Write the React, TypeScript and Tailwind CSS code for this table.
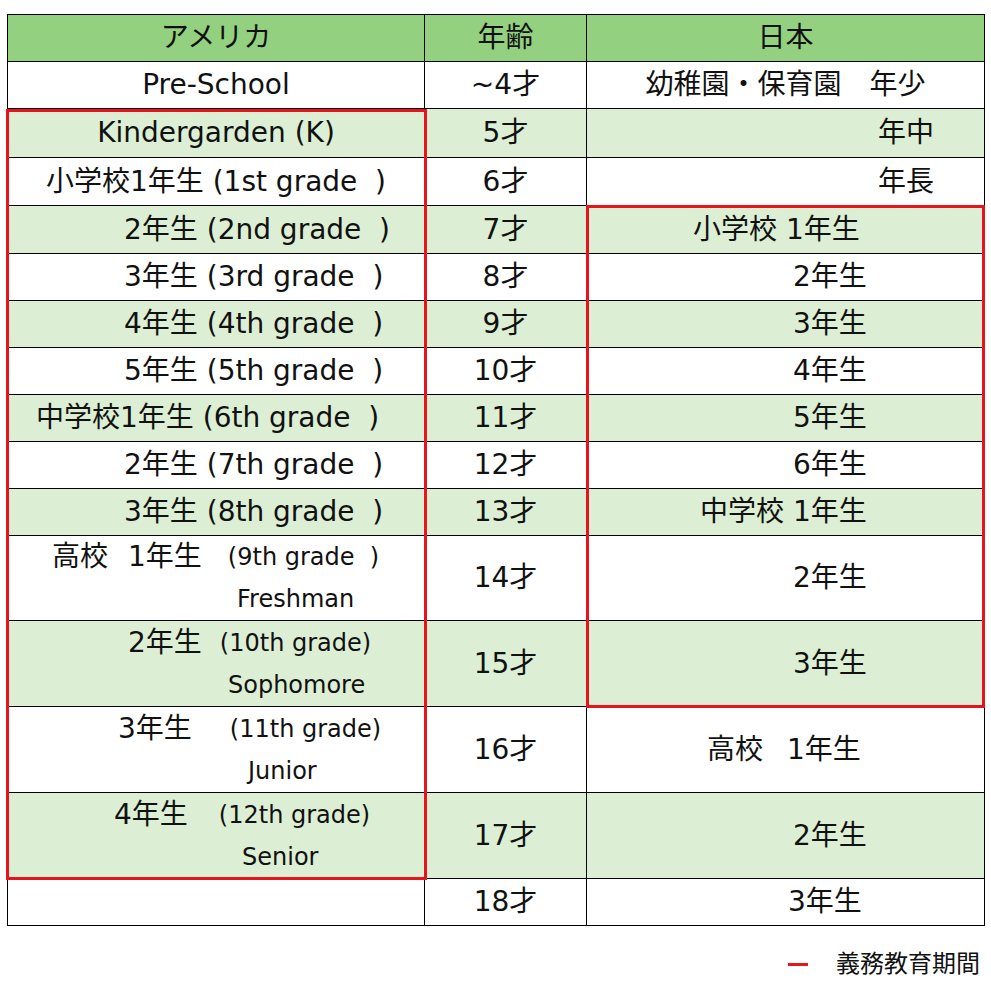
import React from "react";

const FONT = { fontFamily: '"DejaVu Sans", "Noto Sans CJK JP", sans-serif' };

type Row = {
  h: string;
  bg: string;
  c1: React.ReactNode;
  c2: React.ReactNode;
  c3: React.ReactNode;
};

const L = ({ pl, children }: { pl: string; children: React.ReactNode }) => (
  <div className={`flex h-full items-center whitespace-pre ${pl}`}>{children}</div>
);
const C = ({ children }: { children: React.ReactNode }) => (
  <div className="flex h-full items-center justify-center whitespace-pre">{children}</div>
);

const G = "bg-[#dcefd4]";
const W = "bg-white";

export default function App() {
  const rows: Row[] = [
    { h: "h-[47px]", bg: "bg-[#93d07f]", c1: <C>アメリカ</C>, c2: <C>年齢</C>, c3: <C>日本</C> },
    { h: "h-[47px]", bg: W, c1: <C>Pre-School</C>, c2: <C>~4才</C>, c3: <C>幼稚園・保育園　年少</C> },
    { h: "h-[49px]", bg: G, c1: <C>Kindergarden (K)</C>, c2: <C>5才</C>, c3: <L pl="pl-[291px]">年中</L> },
    { h: "h-[48px]", bg: W, c1: <C>小学校1年生 (1st grade  )</C>, c2: <C>6才</C>, c3: <L pl="pl-[291px]">年長</L> },
    { h: "h-[48px]", bg: G, c1: <L pl="pl-[116px]">2年生 (2nd grade  )</L>, c2: <C>7才</C>, c3: <L pl="pl-[106px]">小学校 1年生</L> },
    { h: "h-[47px]", bg: W, c1: <L pl="pl-[116px]">3年生 (3rd grade  )</L>, c2: <C>8才</C>, c3: <L pl="pl-[206px]">2年生</L> },
    { h: "h-[47px]", bg: G, c1: <L pl="pl-[116px]">4年生 (4th grade  )</L>, c2: <C>9才</C>, c3: <L pl="pl-[206px]">3年生</L> },
    { h: "h-[47px]", bg: W, c1: <L pl="pl-[116px]">5年生 (5th grade  )</L>, c2: <C>10才</C>, c3: <L pl="pl-[206px]">4年生</L> },
    { h: "h-[47px]", bg: G, c1: <L pl="pl-[28px]">中学校1年生 (6th grade  )</L>, c2: <C>11才</C>, c3: <L pl="pl-[206px]">5年生</L> },
    { h: "h-[47px]", bg: W, c1: <L pl="pl-[116px]">2年生 (7th grade  )</L>, c2: <C>12才</C>, c3: <L pl="pl-[206px]">6年生</L> },
    { h: "h-[47px]", bg: G, c1: <L pl="pl-[116px]">3年生 (8th grade  )</L>, c2: <C>13才</C>, c3: <L pl="pl-[113px]">中学校 1年生</L> },
    {
      h: "h-[85px]",
      bg: W,
      c1: (
        <div className="flex h-full flex-col justify-center whitespace-pre">
          <div className="flex h-[42px] items-center pl-[44px]">
            <span>高校</span>
            <span className="ml-[20px]">1年生</span>
            <span className="ml-[26px] text-[24px]">(9th grade  )</span>
          </div>
          <div className="flex h-[42px] items-center pl-[229px] text-[24px]">Freshman</div>
        </div>
      ),
      c2: <C>14才</C>,
      c3: <L pl="pl-[206px]">2年生</L>,
    },
    {
      h: "h-[86px]",
      bg: G,
      c1: (
        <div className="flex h-full flex-col justify-center whitespace-pre">
          <div className="flex h-[42px] items-center pl-[120px]">
            <span>2年生</span>
            <span className="ml-[18px] text-[24px]">(10th grade)</span>
          </div>
          <div className="flex h-[42px] items-center pl-[220px] text-[24px]">Sophomore</div>
        </div>
      ),
      c2: <C>15才</C>,
      c3: <L pl="pl-[206px]">3年生</L>,
    },
    {
      h: "h-[86px]",
      bg: W,
      c1: (
        <div className="flex h-full flex-col justify-center whitespace-pre">
          <div className="flex h-[42px] items-center pl-[110px]">
            <span>3年生</span>
            <span className="ml-[38px] text-[24px]">(11th grade)</span>
          </div>
          <div className="flex h-[42px] items-center pl-[240px] text-[24px]">Junior</div>
        </div>
      ),
      c2: <C>16才</C>,
      c3: (
        <L pl="pl-[120px]">
          <span>高校</span>
          <span className="ml-[24px]">1年生</span>
        </L>
      ),
    },
    {
      h: "h-[86px]",
      bg: G,
      c1: (
        <div className="flex h-full flex-col justify-center whitespace-pre">
          <div className="flex h-[42px] items-center pl-[106px]">
            <span>4年生</span>
            <span className="ml-[31px] text-[24px]">(12th grade)</span>
          </div>
          <div className="flex h-[42px] items-center pl-[234px] text-[24px]">Senior</div>
        </div>
      ),
      c2: <C>17才</C>,
      c3: <L pl="pl-[206px]">2年生</L>,
    },
    { h: "h-[47px]", bg: W, c1: <div />, c2: <C>18才</C>, c3: <L pl="pl-[201px]">3年生</L> },
  ];

  return (
    <div className="min-h-[981px] w-[991px] bg-white text-[#111] text-[28px] leading-none" style={FONT}>
      <div className="pl-[7px] pt-[14px]">
        <div className="relative w-[978px] border-l border-t border-black">
          {rows.map((r, i) => (
            <div key={i} className={`grid grid-cols-[417px_162px_398px] ${r.h} ${r.bg}`}>
              <div className="border-b border-r border-black">{r.c1}</div>
              <div className="border-b border-r border-black">{r.c2}</div>
              <div className="border-b border-r border-black">{r.c3}</div>
            </div>
          ))}
          <div className="pointer-events-none absolute left-[-2px] top-[94px] h-[771px] w-[421px] border-[3px] border-[#e8141b]" />
          <div className="pointer-events-none absolute left-[578px] top-[190px] h-[503px] w-[399px] border-[3px] border-[#e8141b]" />
        </div>
        <div className="mt-[26px] flex items-center justify-end pr-[11px]">
          <div className="h-[3px] w-[20px] bg-[#e8141b]" />
          <span className="ml-[28px] text-[24px]">義務教育期間</span>
        </div>
      </div>
    </div>
  );
}
